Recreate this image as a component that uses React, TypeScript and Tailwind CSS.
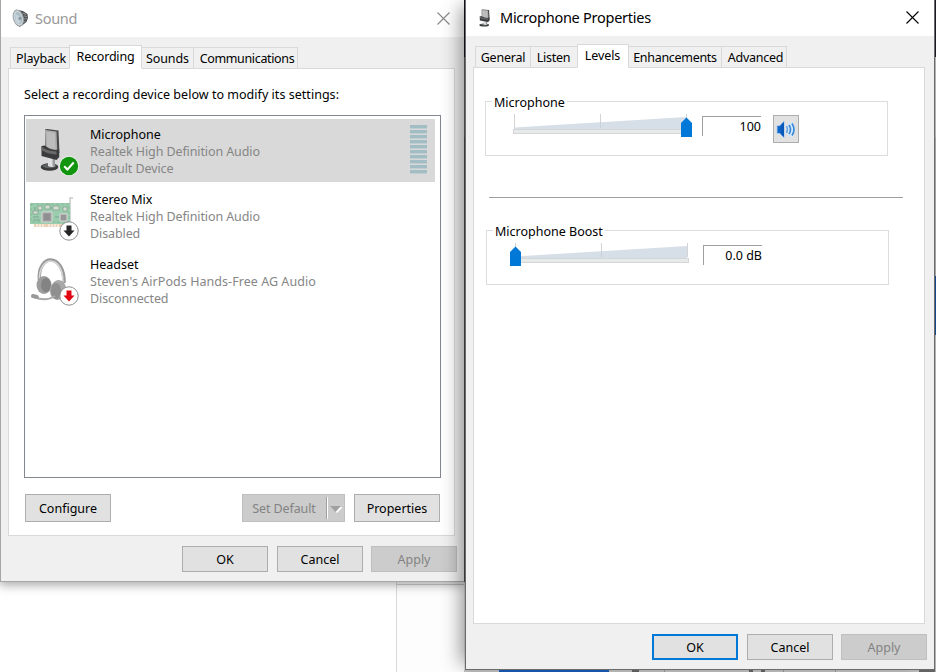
import React from 'react';
import clsx from 'clsx';

interface TabItem {
  label: string;
  className: string;
  active?: boolean;
}

const soundTabs: TabItem[] = [
  { label: 'Playback', className: 'w-[60px] pl-[2px] tracking-[-0.2px]' },
  { label: 'Recording', className: 'w-[73px] tracking-[-0.2px]', active: true },
  { label: 'Sounds', className: 'w-[53px] tracking-[-0.1px]' },
  { label: 'Communications', className: 'w-[105px] pl-[3px] tracking-[-0.35px]' },
];

const micTabs: TabItem[] = [
  { label: 'General', className: 'w-[56px] tracking-[-0.2px]' },
  { label: 'Listen', className: 'w-[48px] pr-px tracking-[-0.25px]' },
  { label: 'Levels', className: 'w-[52px] pr-px tracking-[-0.1px]', active: true },
  { label: 'Enhancements', className: 'w-[94px] tracking-[-0.3px]' },
  { label: 'Advanced', className: 'w-[66px] pl-[3px] tracking-[-0.25px]' },
];

const TabStrip: React.FC<{ tabs: TabItem[] }> = ({ tabs }) => (
  <div className="relative z-10 flex h-6 items-end pl-[2px]">
    {tabs.map((tab) => (
      <div
        key={tab.label}
        className={clsx(
          'flex shrink-0 items-center justify-center border border-[#d9d9d9] -mr-px',
          tab.className,
          tab.active ? 'relative z-10 h-6 border-b-white bg-white' : 'h-[22px] bg-[#f0f0f0] pt-[2px]'
        )}
      >
        {tab.label}
      </div>
    ))}
  </div>
);

interface ButtonProps {
  label: string;
  className?: string;
  disabled?: boolean;
  primary?: boolean;
}

const Button: React.FC<ButtonProps> = ({ label, className = 'h-[26px]', disabled, primary }) => (
  <button
    className={clsx(
      'flex w-[86px] shrink-0 items-center justify-center pt-[2px]',
      className,
      disabled
        ? 'border border-[#bfbfbf] bg-[#cccccc] text-[#838383]'
        : primary
          ? 'border-2 border-[#0078d7] bg-[#e1e1e1]'
          : 'border border-[#adadad] bg-[#e1e1e1]'
    )}
  >
    {label}
  </button>
);

const CloseIcon: React.FC<{ className: string }> = ({ className }) => (
  <svg className={className} width="13" height="13" viewBox="0 0 13 13" fill="none" stroke="currentColor">
    <path d="M.5.5l12 12M12.5.5l-12 12" strokeWidth="1.1" />
  </svg>
);

const SpeakerIcon = () => (
  <svg width="17" height="19" viewBox="0 0 17 19">
    <path d="M6 1l5 1 4.500 3 .5 4-1.500 4-4.500 3.500-3 1.500z" fill="#4f5254" />
    <path d="M11 4l3 1.500M12 7l3 .5M12 10l3-.5M11 13l2.500-.5" stroke="#8d8d8d" strokeWidth="1.1" />
    <ellipse cx="6.300" cy="9" rx="4.900" ry="8.200" transform="rotate(-14 6.300 9)" fill="#cfd7db" stroke="#9aa0a3" />
    <ellipse cx="6.500" cy="9" rx="3.600" ry="6.200" transform="rotate(-14 6.500 9)" fill="#adbdc6" />
    <path d="M3 5l4 2 2 4-2 4-3-3z" fill="#c6d3da" />
    <circle cx="8" cy="9.500" r="1.700" fill="#8c9ba3" />
  </svg>
);

const MicIcon: React.FC<{ width: number; height: number }> = ({ width, height }) => (
  <svg width={width} height={height} viewBox="0 0 22 44" preserveAspectRatio="none">
    <ellipse cx="9.500" cy="39" rx="8.800" ry="3.800" fill="#393b3c" />
    <ellipse cx="9.500" cy="38" rx="7" ry="2.200" fill="#5f6162" />
    <path d="M8 30h7v8q-3.500 1.800-7 0z" fill="#dfe0e1" />
    <path d="M12.500 30h2.500v8h-2.500z" fill="#9a9c9d" />
    <path d="M5 1.500L7 1l11.500 1.500L19.500 25l-2 1-12.500-4z" fill="#4a4b4c" />
    <path d="M5 2L16.500 3.500l.8 21L5.500 20.500z" fill="#a9a9a9" />
    <path d="M6.500 3.500l8.500 1.200.6 17L7 19z" fill="#bcbcbc" />
    <path d="M1.500 18l3.500-.5q4 4 11 4.500l3-1 .3 8-2.800 3-15-4z" fill="#3a3b3c" />
    <path d="M1.500 18.500q5 4.500 15 5v3Q7 26 1.500 22z" fill="#69696a" />
  </svg>
);

const SoundCardIcon = () => (
  <svg width="44" height="32" viewBox="0 0 44 32">
    <path d="M39 1h4M40 1v25" stroke="#d6d6d6" strokeWidth="2" fill="none" />
    <path d="M4 25h32v5H4z" fill="#ead0b0" />
    <path d="M7 26v4M10 26v4M13 26v4M19 26v4M22 26v4M25 26v4M28 26v4" stroke="#fff" />
    <path d="M0 6h40v21H0z" fill="#9bccae" />
    <path d="M1 7h38v18H1z" fill="none" stroke="#83bb9b" strokeDasharray="3 2" />
    <path d="M8 9h4v4H8zM15 8h5v4h-5zM23 9h6v4h-6zM3 14h5v3H3zM33 10h4v4h-4z" fill="#d5ddd5" stroke="#729480" strokeWidth=".6" />
    <path d="M3 20h6M3 23h7M5 10v3M25 20h4M34 23h3M21 10v2" stroke="#7da58f" strokeWidth="1.2" />
    <path d="M12 15h10v10H12z" fill="#9e9e9e" stroke="#d9d9d9" />
    <path d="M14 17h6v6h-6z" fill="#8f8f8f" />
    <path d="M30 17h7v7h-7z" fill="#969696" stroke="#d9d9d9" />
  </svg>
);

const HeadsetIcon = () => (
  <svg width="39" height="43" viewBox="0 0 39 43" fill="none">
    <path d="M9.500 22C8 9 15 2 20.500 2c7.500 0 14 9 13.500 23" stroke="#999" strokeWidth="3.500" />
    <path d="M9.500 21C9 10 15 3 20.500 3c7.500 0 12.500 9 12.500 21" stroke="#d7d7d7" strokeWidth="1.500" />
    <ellipse cx="14" cy="27" rx="7.500" ry="9" fill="#9c9c9c" />
    <ellipse cx="16" cy="27" rx="5" ry="7" fill="#838383" />
    <ellipse cx="28" cy="32" rx="8" ry="10" transform="rotate(12 28 32)" fill="#a8a8a8" />
    <ellipse cx="26" cy="33" rx="5" ry="8" fill="#8f8f8f" />
    <path d="M4 39q12 5 21-1" stroke="#aaa" strokeWidth="2" />
    <rect x="1" y="36.500" width="8" height="4" rx="2" transform="rotate(12 5 38)" fill="#999" />
  </svg>
);

const StatusBadge: React.FC<{ status: 'ok' | 'disabled' | 'disconnected' }> = ({ status }) => (
  <svg className="absolute left-[32.5px] top-[36.5px]" width="20" height="20" viewBox="0 0 20 20">
    {status === 'ok' ? (
      <>
        <circle cx="10" cy="10" r="10" fill="#f5f5f5" />
        <circle cx="10" cy="10" r="9.200" fill="#11950f" />
        <path d="M5.200 10.300l3.200 3.200 6.300-7" stroke="#fff" strokeWidth="2" fill="none" />
      </>
    ) : (
      <>
        <circle cx="10" cy="10" r="9.200" fill="#fff" stroke="#8e8e8e" />
        <path d="M7.500 4.500h5v5h3L10 15.500l-5.500-6h3z" fill={status === 'disabled' ? '#262626' : '#e10612'} />
      </>
    )}
  </svg>
);

interface DeviceRowProps {
  name: string;
  driver: string;
  state: string;
  status: 'ok' | 'disabled' | 'disconnected';
  icon: React.ReactNode;
  iconClass: string;
  driverClass?: string;
  selected?: boolean;
}

const DeviceRow: React.FC<DeviceRowProps> = ({
  name,
  driver,
  state,
  status,
  icon,
  iconClass,
  driverClass = 'tracking-[-0.1px]',
  selected,
}) => (
  <div className={clsx('relative mb-[2px] flex h-[63px] w-[409px]', selected && 'bg-[#d9d9d9]')}>
    <div className="relative w-[64px] shrink-0">
      <div className={iconClass}>{icon}</div>
      <StatusBadge status={status} />
    </div>
    <div className="flex-1 pt-[7px] leading-[17px] text-[#868686]">
      <p className="text-black">{name}</p>
      <p className={driverClass}>{driver}</p>
      <p className="tracking-[-0.1px]">{state}</p>
    </div>
    {selected && (
      <div className="mr-2 mt-[6px] flex w-[17px] flex-col gap-px">
        {Array.from({ length: 10 }, (_, i) => (
          <div key={i} className="h-1 border-b border-[#c0cdd1] bg-[#a3bdc5]" />
        ))}
      </div>
    )}
  </div>
);

interface LevelGroupProps {
  title: string;
  value: string;
  thumb: 'min' | 'max';
  className: string;
  mute?: boolean;
}

const LevelGroup: React.FC<LevelGroupProps> = ({ title, value, thumb, className, mute }) => (
  <div className={clsx('relative flex h-[55px] w-[403px] border border-[#dcdcdc]', className)}>
    <span className="absolute -top-[8px] left-[6px] bg-white px-[2px] leading-[18px]">{title}</span>
    {/* Slider with its volume wedge */}
    <svg className="ml-[23px] mt-[11px] shrink-0" width="184" height="26" viewBox="0 0 184 26">
      <path d="M5.500 1v14M91.500 1v14M177.500 1v14" stroke="#d4d4d4" />
      <path d="M5 14.500L177 4v12H5z" fill="#d6dfe7" />
      <path d="M91.500 9v6" stroke="#c8d0d7" />
      <rect x="4.500" y="16.500" width="174" height="4" fill="#e7eaea" stroke="#d6d6d6" />
      <path
        d="M0 10l5.500-5.500L11 10v14H0z"
        fill="#0078d7"
        transform={thumb === 'max' ? 'translate(172 0)' : 'translate(0 0)'}
      />
    </svg>
    <div className="ml-[9px] mt-[14px] h-5 w-[59px] border-l border-t border-[#a0a0a0] text-right leading-[20px]">
      {value}
    </div>
    {mute && (
      <button className="ml-[12px] mt-[13px] flex h-7 w-[26px] items-center justify-center border border-[#adadad] bg-[#e1e1e1]">
        <svg width="20" height="19" viewBox="0 0 20 19" fill="none">
          <path d="M1 5.500h3L8 1v17l-4-4.500H1z" fill="#0b64ca" stroke="#a8cae9" />
          <path d="M5 5l3-3v15l-3-3z" fill="#0758b9" />
          <path d="M11 5q3 4.500 0 9M14 2.500q6 7 0 14" stroke="#d5e9fa" strokeWidth="4" />
          <path d="M10.500 6q2 3.500 0 7" stroke="#6aa5e0" strokeWidth="1.500" />
          <path d="M13 5q3 4.500 0 9M16 3.500q4 6 0 12" stroke="#3b89d9" strokeWidth="1.700" />
        </svg>
      </button>
    )}
  </div>
);

const SoundWindow = () => (
  <div className="absolute left-0 top-0 flex h-[582px] w-[464px] flex-col border-b border-l border-[#a6a6a6] bg-[#f0f0f0] shadow-[0_2px_10px_1px_rgba(0,0,0,0.35)]">
    <div className="flex h-[37px] shrink-0 items-center bg-white pl-[11px] pr-[14px]">
      <SpeakerIcon />
      <span className="ml-[6px] flex-1 text-[14.5px] tracking-[-0.3px] text-[#999]">Sound</span>
      <CloseIcon className="text-[#888]" />
    </div>
    <div className="ml-[7px] mt-2 flex w-[447px] flex-col">
      <TabStrip tabs={soundTabs} />
      <div className="-mt-px flex h-[468px] flex-col border border-[#d9d9d9] bg-white pl-[15px] pt-[16px]">
        <p className="h-5 leading-[20px] tracking-[0.03px]">Select a recording device below to modify its settings:</p>
        <div className="mt-[10px] h-[363px] w-[417px] border border-[#828790] pl-px pt-[3px]">
          <DeviceRow
            name="Microphone"
            driver="Realtek High Definition Audio"
            state="Default Device"
            status="ok"
            icon={<MicIcon width={22} height={44} />}
            iconClass="ml-[14px] mt-[9px]"
            selected
          />
          <DeviceRow
            name="Stereo Mix"
            driver="Realtek High Definition Audio"
            state="Disabled"
            status="disabled"
            icon={<SoundCardIcon />}
            iconClass="ml-[4px] mt-[13px]"
          />
          <DeviceRow
            name="Headset"
            driver="Steven's AirPods Hands-Free AG Audio"
            state="Disconnected"
            status="disconnected"
            icon={<HeadsetIcon />}
            iconClass="ml-[4px] mt-[9px]"
            driverClass="tracking-[0.05px]"
          />
        </div>
        <div className="ml-px mt-4 flex">
          <Button label="Configure" className="h-7" />
          <button className="ml-[131px] flex h-7 w-[103px] items-center border border-[#bfbfbf] bg-[#cccccc] text-[#838383]">
            <span className="flex-1 pr-px pt-[2px] text-center tracking-[-0.1px]">Set Default</span>
            <span className="h-[22px] w-[2px] border-l border-[#a0a0a0] bg-white" />
            <svg className="ml-[2px] mr-[2px] mt-[2px]" width="12" height="8" viewBox="0 0 12 8">
              <path d="M1 2h12L7 8z" fill="#fff" />
              <path d="M0 1h11L5.500 7z" fill="#a0a0a0" />
            </svg>
          </button>
          <Button label="Properties" className="ml-[9px] h-7" />
        </div>
      </div>
    </div>
    <div className="mt-[10px] flex justify-end pr-[7px]">
      <Button label="OK" className="mr-[9px] h-[26px]" />
      <Button label="Cancel" className="mr-[8px] h-[26px]" />
      <Button label="Apply" disabled />
    </div>
  </div>
);

const MicrophoneWindow = () => (
  <div className="absolute left-[465px] top-0 flex h-[670px] w-[470px] flex-col border border-t-0 border-[#6b6b6b] bg-[#f0f0f0] shadow-[-10px_0_18px_-6px_rgba(0,0,0,0.42)]">
    <div className="flex h-9 shrink-0 items-center bg-white pl-[13px] pr-[15px]">
      <MicIcon width={12} height={18} />
      <span className="ml-[9px] flex-1 text-[14.5px] tracking-[-0.26px]">Microphone Properties</span>
      <CloseIcon className="-mt-[2px] text-black" />
    </div>
    <div className="ml-[7px] mt-2 flex w-[452px] flex-col">
      <TabStrip tabs={micTabs} />
      <div className="-mt-px flex h-[557px] flex-col border border-[#d9d9d9] bg-white">
        <LevelGroup title="Microphone" value="100" thumb="max" className="ml-[11px] mt-[33px]" mute />
        <div className="ml-[15px] mt-[41px] h-px w-[414px] bg-[#a0a0a0]" />
        <LevelGroup title="Microphone Boost" value="0.0 dB" thumb="min" className="ml-[12px] mt-[32px]" />
      </div>
    </div>
    <div className="mt-[10px] flex justify-end pr-[7px]">
      <Button label="OK" className="mr-[9px] h-[26px]" primary />
      <Button label="Cancel" className="mr-[8px] h-[26px]" />
      <Button label="Apply" disabled />
    </div>
  </div>
);

/* Whatever shows behind and around the two dialogs */
const Desktop = () => (
  <div className="flex h-full">
    <div className="w-[396px] bg-white" />
    <div className="w-[68px] border-l border-[#d8d8d8] bg-[#fdfdfd] pt-[584px]">
      <div className="h-px bg-[#cfcfcf]" />
    </div>
    <div className="flex w-[471px] flex-col">
      <div className="h-[57px] bg-[#191b24]" />
      <div className="h-[80px] bg-[#777]" />
      <div className="h-[445px] bg-[#606060]" />
      <div className="h-[88px] bg-[#e4e4e4]" />
      <div className="flex h-[2px] bg-[#c4c4c4]">
        <div className="ml-[35px] w-[110px] bg-[#1a5dbe]" />
        <div className="ml-[23px] w-[7px] bg-[#666]" />
        <div className="ml-[25px] w-px bg-[#999]" />
        <div className="ml-[84px] w-1 bg-[#666]" />
        <div className="ml-[8px] w-1 bg-[#666]" />
        <div className="ml-[18px] w-px bg-[#999]" />
        <div className="ml-[51px] w-px bg-[#999]" />
        <div className="ml-auto w-4 bg-[#666]" />
      </div>
    </div>
    <div className="w-px">
      <div className="h-[57px] bg-[#191b24]" />
      <div className="h-[80px] bg-[#b5b5b5]" />
      <div className="h-[139px] bg-[#a6a6a6]" />
      <div className="h-[59px] bg-[#1a4790]" />
      <div className="h-[337px] bg-[#b5b5b5]" />
    </div>
  </div>
);

const App: React.FC = () => {
  return (
    <div className="relative h-[672px] w-[936px] overflow-hidden whitespace-nowrap bg-white font-['Noto_Sans','Open_Sans',sans-serif] text-[12.5px] text-black">
      <Desktop />
      <SoundWindow />
      <MicrophoneWindow />
    </div>
  );
};

export default App;
